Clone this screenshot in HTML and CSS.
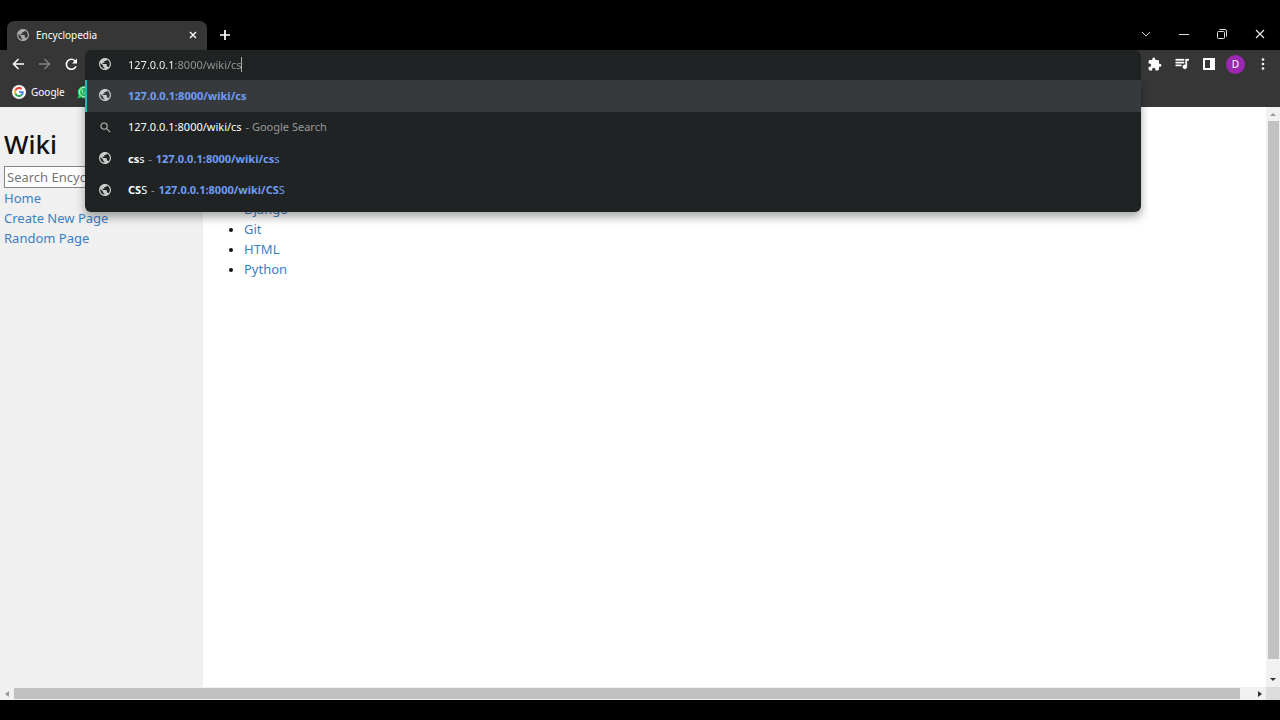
FILE: index.html
```html
<!DOCTYPE html>
<html lang="en">
<head>
    <meta charset="UTF-8">
    <meta name="viewport" content="width=device-width, initial-scale=1.0">
    <title>Encyclopedia</title>
    <link rel="stylesheet" href="styles.css">
</head>
<body>
    <svg class="symbols" aria-hidden="true">
        <symbol id="globe" viewBox="2 2 20 20">
            <path d="M12 2C6.480 2 2 6.480 2 12s4.480 10 10 10 10-4.480 10-10S17.520 2 12 2zm-1 17.930c-3.950-.49-7-3.850-7-7.930 0-.62.08-1.210.21-1.790L9 15v1c0 1.100.9 2 2 2v1.930zm6.900-2.540c-.26-.81-1-1.390-1.900-1.390h-1v-3c0-.55-.45-1-1-1H8v-2h2c.55 0 1-.45 1-1V7h2c1.100 0 2-.9 2-2v-.41c2.930 1.190 5 4.060 5 7.410 0 2.080-.8 3.970-2.100 5.390z"/>
        </symbol>
    </svg>

    <div class="tab-strip">
        <div class="tab">
            <svg class="icon-globe"><use href="#globe"/></svg>
            <span class="tab-title">Encyclopedia</span>
            <button class="tab-close" aria-label="Close tab">
                <svg width="8" height="8" viewBox="0 0 8 8"><path d="M1 1l6 6M7 1L1 7" stroke="#fff" stroke-width="1.4"/></svg>
            </button>
        </div>
        <button class="new-tab" aria-label="New tab">
            <svg width="12" height="12" viewBox="0 0 12 12"><path d="M6 1v10M1 6h10" stroke="#fff" stroke-width="1.7"/></svg>
        </button>
        <div class="window-controls">
            <button aria-label="Search tabs">
                <svg width="10" height="10" viewBox="0 0 10 10"><path d="M1 3l4 4 4-4" fill="none" stroke="#ccc"/></svg>
            </button>
            <button aria-label="Minimize">
                <svg width="10" height="10" viewBox="0 0 10 10"><path d="M0 5.500h10" stroke="#ddd"/></svg>
            </button>
            <button aria-label="Restore">
                <svg width="10" height="10" viewBox="0 0 10 10"><path d="M1.500 2.500h5a1 1 0 0 1 1 1v5a1 1 0 0 1-1 1h-5a1 1 0 0 1-1-1v-5a1 1 0 0 1 1-1zM2.500 .5H8A1.500 1.500 0 0 1 9.500 2v5.500" fill="none" stroke="#ddd"/></svg>
            </button>
            <button aria-label="Close">
                <svg width="10" height="10" viewBox="0 0 10 10"><path d="M1 1l8 8M9 1L1 9" stroke="#eee" stroke-width="1.1"/></svg>
            </button>
        </div>
    </div>

    <div class="toolbar">
        <button class="tool" aria-label="Back">
            <svg width="12" height="12" viewBox="0 0 12 12"><path d="M12 6H1.500M6.500 1l-5 5 5 5" fill="none" stroke="#fff" stroke-width="1.500"/></svg>
        </button>
        <button class="tool" aria-label="Forward">
            <svg width="12" height="12" viewBox="0 0 12 12"><path d="M0 6h10.500M5.500 1l5 5-5 5" fill="none" stroke="#858585" stroke-width="1.300"/></svg>
        </button>
        <button class="tool" aria-label="Reload">
            <svg width="13" height="13" viewBox="0 0 13 13"><path d="M11 8.300A5 5 0 1 1 10.200 3" fill="none" stroke="#fff" stroke-width="1.600"/><path d="M12 .5v5H7z" fill="#fff"/></svg>
        </button>

        <form class="omnibox">
            <div class="address">
                <svg class="icon-globe"><use href="#globe"/></svg>
                <input class="url" type="text" aria-label="Address" value="127.0.0.1:8000/wiki/cs">
                <span class="caret"></span>
            </div>
            <ul class="suggestions">
                <li class="selected">
                    <svg class="icon-globe"><use href="#globe"/></svg>
                    <a href="#"><b class="link">127.0.0.1:8000/wiki/cs</b></a>
                </li>
                <li>
                    <svg class="icon-search" viewBox="0 0 13 13"><circle cx="5.500" cy="5.500" r="3.400"/><path d="M8 8l4 4"/></svg>
                    <a href="#">127.0.0.1:8000/wiki/cs <span class="dim">- Google Search</span></a>
                </li>
                <li>
                    <svg class="icon-globe"><use href="#globe"/></svg>
                    <a href="#"><b>cs</b>s <span class="dim">-</span> <span class="link"><b>127.0.0.1:8000/wiki/cs</b>s</span></a>
                </li>
                <li>
                    <svg class="icon-globe"><use href="#globe"/></svg>
                    <a href="#"><b>CS</b>S <span class="dim">-</span> <span class="link"><b>127.0.0.1:8000/wiki/CS</b>S</span></a>
                </li>
            </ul>
        </form>

        <button class="tool" aria-label="Extensions">
            <svg width="14" height="14" viewBox="1 0 23 23"><path fill="#fff" d="M20.500 11H19V7c0-1.100-.9-2-2-2h-4V3.500a2.500 2.500 0 0 0-5 0V5H4c-1.100 0-2 .9-2 2v3.800h1.500c1.500 0 2.700 1.200 2.700 2.700S5 16.200 3.500 16.200H2V20c0 1.100.9 2 2 2h3.800v-1.500c0-1.500 1.200-2.700 2.700-2.700s2.700 1.200 2.700 2.700V22H17c1.100 0 2-.9 2-2v-4h1.500a2.500 2.500 0 0 0 0-5z"/></svg>
        </button>
        <button class="tool" aria-label="Media controls">
            <svg width="14" height="14" viewBox="2 3 20 20"><path fill="#fff" stroke="#fff" stroke-width=".5" d="M15 6H3v2h12V6zm0 4H3v2h12v-2zM3 16h8v-2H3v2zM17 6v8.180c-.31-.11-.65-.18-1-.18-1.660 0-3 1.340-3 3s1.340 3 3 3 3-1.340 3-3V8h3V6h-5z"/></svg>
        </button>
        <button class="tool" aria-label="Side panel">
            <svg width="12" height="12" viewBox="0 0 12 12"><path d="M0 0h12v12H0zM2 2v8h5V2z" fill="#fff" fill-rule="evenodd"/></svg>
        </button>
        <button class="tool" aria-label="Profile"><span class="avatar">D</span></button>
        <button class="tool" aria-label="Menu">
            <svg width="12" height="12" viewBox="0 0 12 12" fill="#fff"><circle cx="6" cy="1.500" r="1.300"/><circle cx="6" cy="6" r="1.300"/><circle cx="6" cy="10.500" r="1.300"/></svg>
        </button>
    </div>

    <div class="bookmarks">
        <a href="#">
            <span class="google-badge">
                <svg width="10" height="10" viewBox="0 0 48 48">
                    <path fill="#ea4335" d="M24 9.500c3.540 0 6.710 1.220 9.210 3.600l6.850-6.850C35.900 2.380 30.470 0 24 0 14.620 0 6.510 5.380 2.560 13.220l7.980 6.190C12.430 13.720 17.740 9.500 24 9.500z"/>
                    <path fill="#4285f4" d="M46.980 24.550c0-1.570-.15-3.090-.38-4.550H24v9.020h12.940c-.58 2.960-2.260 5.480-4.780 7.180l7.730 6c4.510-4.180 7.090-10.360 7.090-17.650z"/>
                    <path fill="#fbbc05" d="M10.530 28.590c-.48-1.450-.76-2.990-.76-4.590s.27-3.140.76-4.590l-7.980-6.190C.92 16.460 0 20.120 0 24s.92 7.540 2.560 10.780l7.970-6.190z"/>
                    <path fill="#34a853" d="M24 48c6.480 0 11.930-2.130 15.890-5.810l-7.730-6c-2.150 1.450-4.920 2.300-8.160 2.300-6.260 0-11.570-4.220-13.470-9.910l-7.980 6.190C6.510 42.620 14.620 48 24 48z"/>
                </svg>
            </span>
            Google
        </a>
        <a href="#" aria-label="WhatsApp">
            <svg width="14" height="14" viewBox="0 0 14 14">
                <path d="M.5 13.500l1-3.500A6.300 6.300 0 1 1 4 12.600z" fill="#25d366"/>
                <circle cx="7" cy="7" r="4.700" fill="none" stroke="#fff"/>
                <path d="M5 4.300c-1 1 .3 3 1.600 4.200 1.200 1 2.600 1.500 3 .3l-1.400-.9-.7.600c-.8-.3-1.500-1.100-1.800-1.900l.5-.7z" fill="#fff"/>
            </svg>
        </a>
    </div>

    <div class="viewport">
        <div class="page">
            <div class="sidebar">
                <h2>Wiki</h2>
                <form>
                    <input class="search" type="text" name="q" aria-label="Search Encyclopedia" placeholder="Search Encyclopedia">
                </form>
                <div><a href="#">Home</a></div>
                <div><a href="#">Create New Page</a></div>
                <div><a href="#">Random Page</a></div>
            </div>
            <ul class="entries">
                <li><a href="#">Django</a></li>
                <li><a href="#">Git</a></li>
                <li><a href="#">HTML</a></li>
                <li><a href="#">Python</a></li>
            </ul>
        </div>
        <div class="scroll-y">
            <svg width="14" height="14" viewBox="0 0 14 14"><path d="M4 9l3-3 3 3z" fill="#999"/></svg>
            <div class="thumb"></div>
            <svg width="14" height="14" viewBox="0 0 14 14"><path d="M4 5h6L7 8z" fill="#333"/></svg>
        </div>
        <div class="scroll-x">
            <svg width="14" height="13" viewBox="0 0 14 13"><path d="M9 4v6L5 7z" fill="#999"/></svg>
            <div class="thumb"></div>
            <svg width="14" height="13" viewBox="0 0 14 13"><path d="M6 4v6l4-3z" fill="#333"/></svg>
        </div>
        <div class="corner"></div>
    </div>
</body>
</html>
```
FILE: styles.css
```css
* {
    box-sizing: border-box;
}

body {
    margin: 0;
    padding: 21px 0 20px;
    height: 100vh;
    display: flex;
    flex-direction: column;
    background-color: #000;
    color: #fff;
    font-family: "Noto Sans", "Open Sans", sans-serif;
    font-size: 11px;
}

button {
    display: flex;
    align-items: center;
    justify-content: center;
    padding: 0;
    border: none;
    background: none;
    color: inherit;
    font: inherit;
}

a {
    color: inherit;
    text-decoration: none;
}

ul {
    margin: 0;
    padding: 0;
}

.symbols {
    display: none;
}

.icon-globe,
.icon-search {
    flex: none;
    width: 12px;
    height: 12px;
    fill: #ccc;
}

.icon-search {
    fill: none;
    stroke: #bbb;
    stroke-width: 1.2px;
}

/* tabs */
.tab-strip {
    display: flex;
    height: 29px;
    padding-left: 7px;
}

.tab {
    display: flex;
    align-items: center;
    width: 200px;
    padding: 0 8px 2px 10px;
    background-color: #363636;
    border-radius: 7px 7px 0 0;
    font-size: 10px;
}

.tab .icon-globe {
    fill: #aaa;
}

.tab-title {
    flex: 1;
    margin-left: 7px;
}

.tab-close {
    width: 12px;
    height: 12px;
}

.new-tab {
    width: 36px;
    height: 28px;
}

.window-controls {
    display: flex;
    margin-left: auto;
    padding-right: 1px;
}

.window-controls button {
    width: 38px;
    height: 25px;
}

/* toolbar */
.toolbar {
    display: flex;
    height: 30px;
    padding: 0 4px;
    background-color: #363636;
}

.tool {
    width: 27px;
    height: 28px;
}

.avatar {
    width: 19px;
    height: 19px;
    border-radius: 50%;
    background-color: #9c27b0;
    font-size: 10px;
    line-height: 19px;
}

.omnibox {
    flex: 1;
    position: relative;
    z-index: 1;
}

.address {
    display: flex;
    align-items: center;
    height: 30px;
    padding: 0 0 2px 14px;
    background-color: #202324;
    border-radius: 6px 6px 0 0;
}

/* host part is white, the rest of the url is grey */
.url {
    width: 113px;
    height: 20px;
    margin-left: 17px;
    padding: 0;
    border: none;
    outline: none;
    background-image: linear-gradient(to right, #fff 46px, #999 46px);
    background-clip: text;
    -webkit-background-clip: text;
    color: transparent;
    font: inherit;
}

.caret {
    width: 1px;
    height: 15px;
    background-color: #aaa;
}

.suggestions {
    position: absolute;
    top: 100%;
    left: 0;
    right: 0;
    display: flex;
    flex-direction: column;
    height: 132px;
    padding-bottom: 6px;
    background-color: #202324;
    border-radius: 0 0 6px 6px;
    box-shadow: 0 5px 10px rgba(0, 0, 0, 0.35);
    list-style: none;
}

.suggestions li {
    flex: 1;
    display: flex;
    align-items: center;
    gap: 17px;
    padding: 0 0 1px 14px;
}

.suggestions .selected {
    padding-left: 12px;
    border-left: 2px solid #26b5b0;
    background-color: #363a3c;
}

.link {
    color: #6f9df5;
}

.dim {
    margin: 0 1px;
    color: #999;
}

/* bookmarks */
.bookmarks {
    display: flex;
    align-items: center;
    gap: 12px;
    height: 27px;
    padding: 0 0 4px 12px;
    background-color: #363636;
    font-size: 10px;
}

.bookmarks a {
    display: flex;
    align-items: center;
    gap: 5px;
}

.google-badge {
    display: flex;
    align-items: center;
    justify-content: center;
    width: 14px;
    height: 14px;
    border-radius: 50%;
    background-color: #fff;
}

/* page */
.viewport {
    flex: 1;
    display: grid;
    grid-template-columns: 1fr 14px;
    grid-template-rows: 1fr 13px;
    min-height: 0;
    background-color: #fff;
}

.page {
    display: flex;
    color: #111;
    font-size: 13px;
    line-height: 20px;
}

.page a {
    color: #3b7fc4;
}

.page h2 {
    margin: 0;
    font-size: 26px;
    font-weight: 500;
    line-height: 32px;
}

.sidebar {
    width: 203px;
    padding: 21px 4px 0;
    background-color: #f0f0f0;
}

.sidebar form {
    display: flex;
    margin-top: 6px;
}

.search {
    width: 150px;
    height: 22px;
    padding: 0 2px;
    border: 1px solid #858585;
    font: inherit;
}

.search::placeholder {
    color: #757575;
}

.entries {
    flex: 1;
    padding: 92px 9px 0 41px;
}

.entries li::marker {
    font-size: 11px;
}

/* scrollbars */
.scroll-y,
.scroll-x {
    display: flex;
    background-color: #f1f1f1;
}

.scroll-y {
    flex-direction: column;
}

.thumb {
    flex: 1;
    background-color: #c1c1c1;
}

.scroll-y .thumb {
    margin: 0 1px 14px 2px;
}

.scroll-x .thumb {
    margin: 1px 12px 1px 0;
}

.corner {
    background-color: #dcdcdc;
}
```
